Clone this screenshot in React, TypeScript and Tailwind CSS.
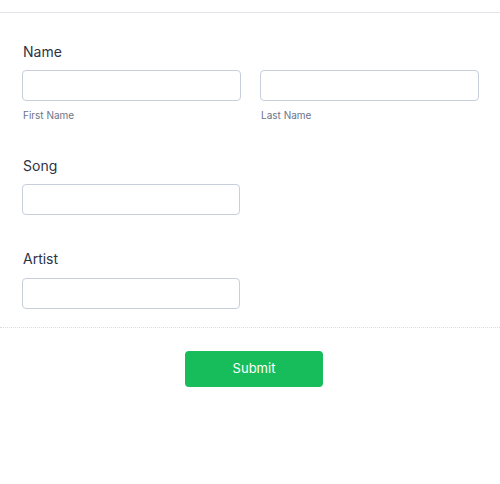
import React from 'react';

const font = { fontFamily: 'Inter, "Noto Sans", sans-serif' };

const Field: React.FC<{ className?: string }> = ({ className = '' }) => (
  <input
    type="text"
    className={`h-[31px] rounded-[4px] border border-[#c8ceda] bg-white px-2 text-sm outline-none ${className}`}
  />
);

const App: React.FC = () => {
  return (
    <div className="h-[484px] w-[500px] bg-white" style={font}>
      <div className="h-[13px] border-b border-[#e3e5ea]" />

      <div className="px-[22px] pt-[29px]">
        {/* Name */}
        <label className="block pl-[1px] text-[14px] leading-[20px] text-[#2c3345]">Name</label>
        <div className="mt-[8px] flex gap-[19px]">
          <div className="flex flex-col">
            <Field className="w-[219px]" />
            <span className="mt-[7px] pl-[1px] text-[10px] leading-[14px] text-[#6b7489]">First Name</span>
          </div>
          <div className="flex flex-col">
            <Field className="w-[219px]" />
            <span className="mt-[7px] pl-[1px] text-[10px] leading-[14px] text-[#6b7489]">Last Name</span>
          </div>
        </div>

        {/* Song */}
        <label className="mt-[34px] block pl-[1px] text-[14px] leading-[20px] text-[#2c3345]">Song</label>
        <Field className="mt-[8px] block w-[218px]" />

        {/* Artist */}
        <label className="mt-[34px] block pl-[1px] text-[14px] leading-[20px] text-[#2c3345]">Artist</label>
        <Field className="mt-[9px] block w-[218px]" />
      </div>

      <div className="mt-[18px] border-t border-dotted border-[#d8dbe2]" />

      <div className="flex justify-center pt-[23px] pl-[8px]">
        <button className="h-[36px] w-[138px] rounded-[4px] bg-[#18bd5b] text-[13px] font-normal text-white">
          Submit
        </button>
      </div>
    </div>
  );
};

export default App;
